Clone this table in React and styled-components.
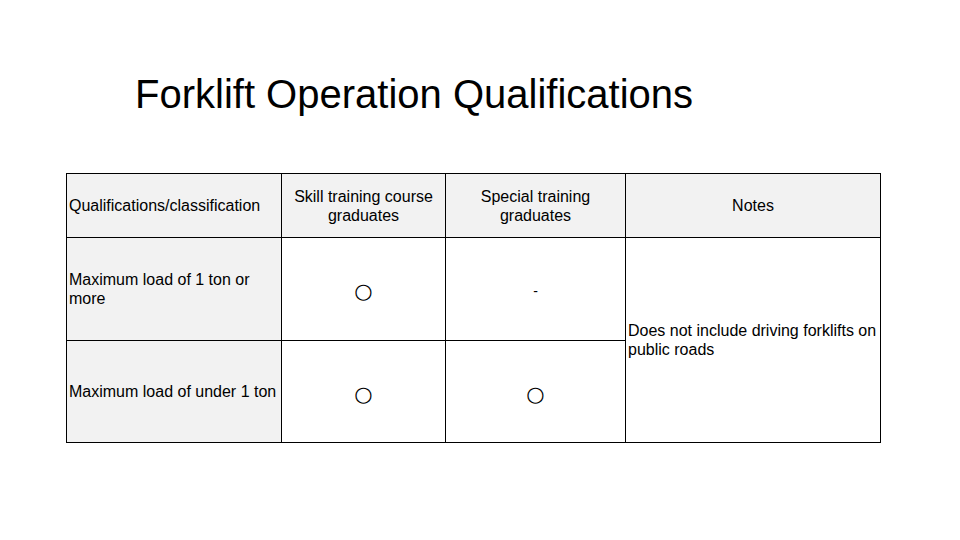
import React from "react";
import styled, { createGlobalStyle } from "styled-components";

const GlobalStyle = createGlobalStyle`
  html, body {
    margin: 0;
    padding: 0;
    background: #ffffff;
  }
  body {
    font-family: "Liberation Sans", Arial, sans-serif;
    color: #000;
  }
`;

const Slide = styled.div`
  width: 960px;
  height: 540px;
  box-sizing: border-box;
  padding: 71px 0 0 66px;
`;

const Title = styled.h1`
  margin: 0 0 56px 69px;
  font-size: 40px;
  font-weight: 400;
  line-height: 46px;
  letter-spacing: 0;
`;

const Table = styled.table`
  border-collapse: collapse;
  table-layout: fixed;
  width: 814px;
  font-size: 16px;
  line-height: 19px;
`;

const Cell = styled.td`
  border: 1px solid #000;
  padding: 0 2px;
  height: ${(p) => p.$h || "auto"};
  background: ${(p) => (p.$gray ? "#f2f2f2" : "#ffffff")};
  text-align: ${(p) => p.$align || "center"};
  vertical-align: middle;
  box-sizing: border-box;
`;

const Mark = styled.span`
  display: inline-block;
  font-family: ${(p) => (p.$dash ? '"Liberation Sans", sans-serif' : '"DejaVu Sans", sans-serif')};
  font-size: ${(p) => (p.$dash ? "14px" : "21px")};
  line-height: 19px;
  transform: translateY(${(p) => (p.$dash ? "2px" : "3px")});
`;

const rows = [
  { label: "Maximum load of 1 ton or more", skill: "○", special: "-", h: "103px" },
  { label: "Maximum load of under 1 ton", skill: "○", special: "○", h: "102px" },
];

export default function App() {
  return (
    <>
      <GlobalStyle />
      <Slide>
        <Title>Forklift Operation Qualifications</Title>
        <Table>
          <colgroup>
            <col style={{ width: 215 }} />
            <col style={{ width: 164 }} />
            <col style={{ width: 180 }} />
            <col style={{ width: 255 }} />
          </colgroup>
          <tbody>
            <tr>
              <Cell $gray $align="left" $h="64px">
                Qualifications/classification
              </Cell>
              <Cell $gray>Skill training course graduates</Cell>
              <Cell $gray>Special training graduates</Cell>
              <Cell $gray>Notes</Cell>
            </tr>
            {rows.map((r, i) => (
              <tr key={r.label}>
                <Cell $gray $align="left" $h={r.h}>
                  {r.label}
                </Cell>
                <Cell>
                  <Mark>{r.skill}</Mark>
                </Cell>
                <Cell>
                  <Mark $dash={r.special === "-"}>{r.special}</Mark>
                </Cell>
                {i === 0 && (
                  <Cell rowSpan={2} $align="left">
                    Does not include driving forklifts on public roads
                  </Cell>
                )}
              </tr>
            ))}
          </tbody>
        </Table>
      </Slide>
    </>
  );
}
